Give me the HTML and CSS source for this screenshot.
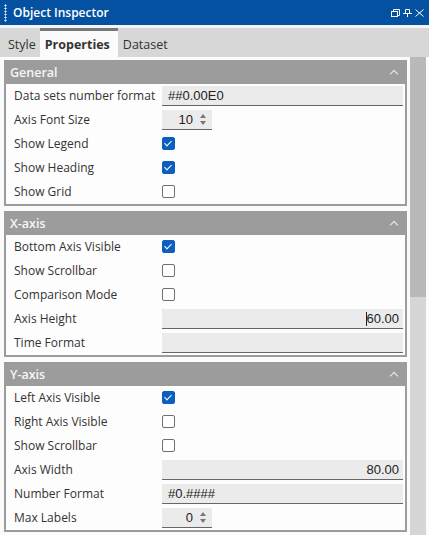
FILE: index.html
```html
<!DOCTYPE html>
<html>
<head>
<meta charset="utf-8">
<link rel="stylesheet" href="styles.css">
</head>
<body>
<div class="window">
  <div class="titlebar">
    <span class="grip"></span>
    <span class="title">Object Inspector</span>
    <span class="tb-icons">
      <svg width="9" height="8" viewBox="0 0 9 8"><path d="M2.5 2.5V0.5H8.5V6.5H6.5" fill="none" stroke="#fff" stroke-width="1"/><rect x="0.5" y="2.5" width="6" height="5" fill="none" stroke="#fff" stroke-width="1"/></svg>
      <svg width="9" height="8" viewBox="0 0 9 8"><path d="M2.5 0.5H6.5V4.5H2.5Z M0 4.5H9 M4.5 4.5V8" fill="none" stroke="#fff" stroke-width="1"/></svg>
      <svg width="9" height="8" viewBox="0 0 9 8"><path d="M0.5 0.5L8.5 7.5M8.5 0.5L0.5 7.5" fill="none" stroke="#fff" stroke-width="1"/></svg>
    </span>
  </div>
  <div class="tabs">
    <div class="tab">Style</div>
    <div class="tab active">Properties</div>
    <div class="tab">Dataset</div>
  </div>
  <div class="content">
    <div class="sections">
      <div class="section">
        <div class="sec-head"><span>General</span><span class="chev"></span></div>
        <div class="row"><span class="label">Data sets number format</span><span class="input">##0.00E0</span></div>
        <div class="row"><span class="label">Axis Font Size</span><span class="spin"><span class="num">10</span><span class="arrows"></span></span></div>
        <div class="row"><span class="label">Show Legend</span><span class="check on"></span></div>
        <div class="row"><span class="label">Show Heading</span><span class="check on"></span></div>
        <div class="row"><span class="label">Show Grid</span><span class="check"></span></div>
      </div>
      <div class="section">
        <div class="sec-head"><span>X-axis</span><span class="chev"></span></div>
        <div class="row"><span class="label">Bottom Axis Visible</span><span class="check on"></span></div>
        <div class="row"><span class="label">Show Scrollbar</span><span class="check"></span></div>
        <div class="row"><span class="label">Comparison Mode</span><span class="check"></span></div>
        <div class="row"><span class="label">Axis Height</span><span class="input right"><span class="caret"></span>60.00</span></div>
        <div class="row"><span class="label">Time Format</span><span class="input"></span></div>
      </div>
      <div class="section">
        <div class="sec-head"><span>Y-axis</span><span class="chev"></span></div>
        <div class="row"><span class="label">Left Axis Visible</span><span class="check on"></span></div>
        <div class="row"><span class="label">Right Axis Visible</span><span class="check"></span></div>
        <div class="row"><span class="label">Show Scrollbar</span><span class="check"></span></div>
        <div class="row"><span class="label">Axis Width</span><span class="input right">80.00</span></div>
        <div class="row"><span class="label">Number Format</span><span class="input">#0.####</span></div>
        <div class="row"><span class="label">Max Labels</span><span class="spin"><span class="num">0</span><span class="arrows"></span></span></div>
      </div>
    </div>
    <div class="scrollbar"><div class="thumb"></div></div>
  </div>
</div>
</body>
</html>
```
FILE: styles.css
```css
html, body {
  margin: 0;
  padding: 0;
  background: #fbfbfb;
}
.window {
  width: 429px;
  height: 535px;
  overflow: hidden;
  font-family: "Open Sans", "Noto Sans", sans-serif;
  font-size: 12px;
  color: #333;
}
.titlebar {
  height: 25px;
  background: #0451a2;
  display: flex;
  align-items: center;
  color: #fff;
  border-bottom: 3px solid #f4f4f4;
}
.grip {
  width: 3px;
  height: 18px;
  margin-left: 4px;
  margin-right: 6px;
  background-image: radial-gradient(circle at 1.5px 1.5px, #dfe8f5 0.9px, transparent 1.2px);
  background-size: 3px 3px;
}
.title {
  font-weight: 600;
  font-size: 12px;
  flex: 1;
}
.tb-icons {
  display: flex;
  gap: 3px;
  margin-right: 5px;
  align-items: center;
}
.tb-icons svg { display: block; }
.tabs {
  height: 29px;
  background: #d7d7d7;
  display: flex;
}
.tab {
  padding: 0 4px 0 8px;
  display: flex;
  align-items: center;
  font-size: 12.5px;
  color: #333;
  border-top: 3px solid transparent;
}
.tab.active {
  background: #fbfbfb;
  border-top-color: #777;
  font-weight: 700;
  padding: 0 8px 0 5px;
}
.tab.active + .tab {
  padding-left: 5px;
}
.content {
  display: flex;
  height: 478px;
}
.sections {
  width: 403px;
  margin-left: 4px;
  padding-top: 3px;
  display: flex;
  flex-direction: column;
  gap: 5px;
}
.section {
  border: 2px solid #9c9c9c;
  border-top: 0;
  background: #fdfdfd;
}
.sec-head {
  height: 24px;
  background: #9c9c9c;
  color: #f6f6f6;
  font-weight: 600;
  font-size: 12.5px;
  display: flex;
  align-items: center;
  justify-content: space-between;
  padding: 0 8px 0 4px;
}
.chev {
  width: 5px;
  height: 5px;
  border-left: 1.5px solid #eee;
  border-top: 1.5px solid #eee;
  transform: rotate(45deg);
  margin-top: 3px;
}
.row {
  height: 24px;
  display: flex;
  align-items: center;
  padding-left: 8px;
  padding-right: 2px;
}
.label {
  width: 148px;
  flex: none;
  white-space: nowrap;
  margin-top: -1px;
}
.input {
  flex: 1;
  height: 19px;
  background: #ebebeb;
  border-bottom: 1px solid #666;
  font-family: "Liberation Sans", Arial, sans-serif;
  font-size: 13px;
  color: #222;
  display: flex;
  align-items: center;
  padding: 0 6px;
}
.input.right {
  justify-content: flex-end;
  padding-right: 4px;
}
.caret {
  width: 1px;
  height: 14px;
  background: #222;
  margin-right: -1px;
}
.spin {
  width: 50px;
  height: 19px;
  background: #ebebeb;
  border-bottom: 1px solid #666;
  display: flex;
  align-items: center;
  justify-content: flex-end;
  font-family: "Liberation Sans", Arial, sans-serif;
  font-size: 13px;
  color: #222;
}
.num {
  margin-right: 7px;
}
.arrows {
  width: 7px;
  height: 13px;
  margin-right: 5px;
  position: relative;
}
.arrows::before, .arrows::after {
  content: "";
  position: absolute;
  left: 0;
  border-left: 3.5px solid transparent;
  border-right: 3.5px solid transparent;
}
.arrows::before {
  top: 1px;
  border-bottom: 4px solid #777;
}
.arrows::after {
  bottom: 1px;
  border-top: 4px solid #777;
}
.check {
  width: 11px;
  height: 11px;
  border: 1px solid #6f6f6f;
  border-radius: 2px;
  background: #fff;
  box-sizing: content-box;
  position: relative;
  margin-top: -1px;
}
.check.on {
  background: #0c5fbf;
  border-color: #0c5fbf;
}
.check.on::after {
  content: "";
  position: absolute;
  left: 3px;
  top: 1px;
  width: 3px;
  height: 6px;
  border-right: 1.5px solid #fff;
  border-bottom: 1.5px solid #fff;
  transform: rotate(45deg);
}
.scrollbar {
  width: 16px;
  margin-left: 3px;
  background: #d6d6d6;
}
.thumb {
  height: 240px;
  background: #b9b9b9;
}
```
